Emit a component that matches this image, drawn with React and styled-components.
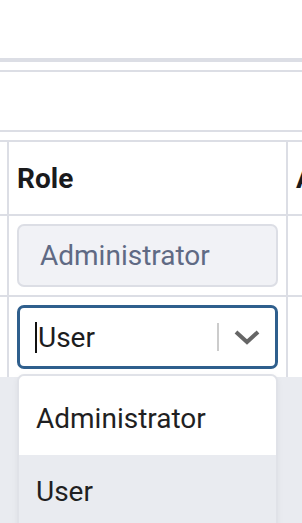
import React from "react";
import styled, { createGlobalStyle } from "styled-components";

const GlobalStyle = createGlobalStyle`
  html, body {
    margin: 0;
    padding: 0;
    background: #ffffff;
    overflow: hidden;
  }
  body {
    font-family: Roboto, "Noto Sans", Arial, sans-serif;
    color: #1c1c1e;
  }
  * { box-sizing: border-box; }
`;

const Page = styled.div`
  width: 302px;
  height: 523px;
  display: flex;
  flex-direction: column;
  overflow: hidden;
  background: #e9ebf0;
`;

const Top = styled.div`
  height: 58px;
  background: #fff;
  flex-shrink: 0;
`;

const Band = styled.div`
  flex-shrink: 0;
  background: #fff;
  height: ${(p) => p.h}px;
  border-top: ${(p) => p.line}px solid #dcdee5;
`;

const Table = styled.div`
  background: #fff;
  flex-shrink: 0;
  border-top: 2px solid #dcdee5;
`;

const Row = styled.div`
  display: grid;
  grid-template-columns: 7px 279px 200px;
  height: ${(p) => p.h}px;
  border-bottom: ${(p) => (p.last ? 0 : 2)}px solid #dcdee5;
`;

const Cell = styled.div`
  border-left: ${(p) => (p.first ? 0 : 2)}px solid #dcdee5;
  padding: ${(p) => (p.head ? "0 8px" : "8px 8px 0 8px")};
  display: flex;
  align-items: ${(p) => (p.head ? "center" : "flex-start")};
  font-size: 28px;
  font-weight: ${(p) => (p.head ? 700 : 400)};
  color: #1a1a1c;
  white-space: nowrap;
  overflow: hidden;
  position: relative;
`;

const Disabled = styled.div`
  width: 261px;
  height: 63px;
  border: 2px solid #dcdee5;
  border-radius: 7px;
  background: #f1f2f6;
  color: #5f6a84;
  font-size: 28px;
  display: flex;
  align-items: center;
  padding-left: 21px;
`;

const Select = styled.div`
  width: 261px;
  height: 64px;
  border: 3px solid #2f5f8d;
  border-radius: 7px;
  background: #fff;
  display: flex;
  align-items: center;
`;

const Value = styled.div`
  flex: 1;
  display: flex;
  align-items: center;
  padding-left: 15px;
  font-size: 28px;
  color: #1c1c1e;
`;

const Caret = styled.span`
  width: 2px;
  height: 31px;
  background: #111;
  margin-right: 1px;
`;

const Divider = styled.span`
  width: 2px;
  height: 28px;
  background: #cccccc;
`;

const Arrow = styled.div`
  width: 56px;
  display: flex;
  justify-content: center;
  align-items: center;
`;

const Below = styled.div`
  flex: 1;
  position: relative;
`;

const Menu = styled.div`
  position: absolute;
  left: 17px;
  top: -3px;
  width: 261px;
  height: 200px;
  background: #fff;
  border: 2px solid #e0e2e8;
  border-radius: 7px;
  padding-top: 6px;
  overflow: hidden;
  box-shadow: 0 2px 6px rgba(0, 0, 0, 0.05);
`;

const Option = styled.div`
  height: 73px;
  display: flex;
  align-items: center;
  padding-left: 17px;
  font-size: 28px;
  color: #1f1f22;
  background: ${(p) => (p.active ? "#e9ebf0" : "#fff")};
`;

export default function App() {
  return (
    <Page>
      <GlobalStyle />
      <Top />
      <Band h={12} line={4} />
      <Band h={60} line={2} />
      <Band h={10} line={2} />
      <Table>
        <Row h={74}>
          <Cell first head />
          <Cell head>Role</Cell>
          <Cell head>Actions</Cell>
        </Row>
        <Row h={81}>
          <Cell first />
          <Cell>
            <Disabled>Administrator</Disabled>
          </Cell>
          <Cell />
        </Row>
        <Row h={80} last>
          <Cell first />
          <Cell>
            <Select>
              <Value>
                <Caret />
                User
              </Value>
              <Divider />
              <Arrow>
                <svg width="26" height="16" viewBox="0 0 26 16">
                  <polyline
                    points="2,3 13,13 24,3"
                    fill="none"
                    stroke="#666"
                    strokeWidth="4"
                  />
                </svg>
              </Arrow>
            </Select>
          </Cell>
          <Cell />
        </Row>
      </Table>
      <Below>
        <Menu>
          <Option>Administrator</Option>
          <Option active>User</Option>
        </Menu>
      </Below>
    </Page>
  );
}
